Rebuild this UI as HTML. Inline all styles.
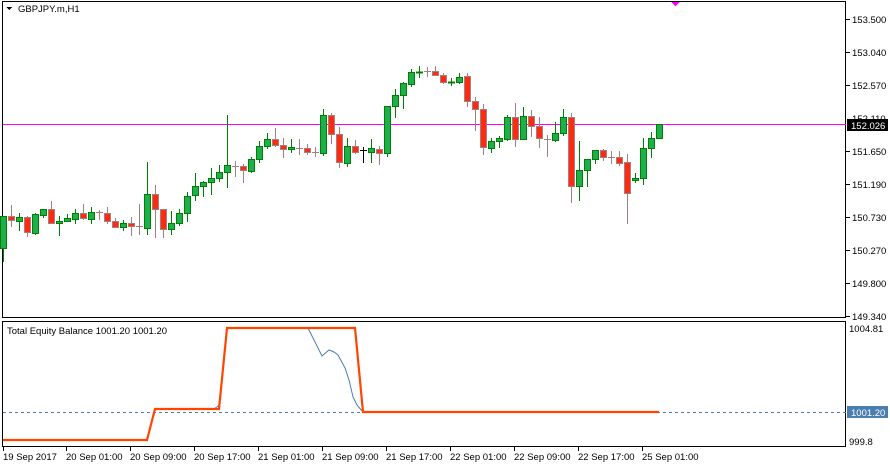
<!DOCTYPE html>
<html><head><meta charset="utf-8"><style>
html,body{margin:0;padding:0;background:#fff;width:890px;height:464px;overflow:hidden}
svg text{font-family:"Liberation Sans","DejaVu Sans",sans-serif;font-size:9.5px;fill:#000}
</style></head><body>
<svg id="s" width="890" height="464" xmlns="http://www.w3.org/2000/svg" shape-rendering="crispEdges">
<rect x="0" y="0" width="890" height="464" fill="#fff"/>
<rect x="2.5" y="1.5" width="843" height="316" fill="none" stroke="#000"/>
<rect x="2.5" y="321.5" width="843" height="125" fill="none" stroke="#000"/>
<polygon points="6,7 12,7 9,10" fill="#000"/>
<text x="18" y="12">GBPJPY.m,H1</text>
<polygon points="671,2 680,2 675.5,6" fill="#ff00ff"/>
<line x1="3" y1="124.5" x2="846" y2="124.5" stroke="#ff00ff" stroke-width="1"/>
<g id="candles"></g>
<g stroke="#000">
<line x1="846" y1="19.5" x2="850" y2="19.5"/><line x1="846" y1="52.5" x2="850" y2="52.5"/>
<line x1="846" y1="85.5" x2="850" y2="85.5"/><line x1="846" y1="151.5" x2="850" y2="151.5"/>
<line x1="846" y1="184.5" x2="850" y2="184.5"/><line x1="846" y1="217.5" x2="850" y2="217.5"/>
<line x1="846" y1="250.5" x2="850" y2="250.5"/><line x1="846" y1="283.5" x2="850" y2="283.5"/>
<line x1="846" y1="316.5" x2="850" y2="316.5"/>
</g>
<text x="852" y="23">153.500</text>
<text x="852" y="56">153.040</text>
<text x="852" y="89">152.570</text>
<text x="852" y="122">152.110</text>
<rect x="847" y="119" width="41" height="12" fill="#000"/>
<text x="851" y="129" style="fill:#fff">152.026</text>
<text x="852" y="155">151.650</text>
<text x="852" y="188">151.190</text>
<text x="852" y="221">150.730</text>
<text x="852" y="254">150.270</text>
<text x="852" y="287">149.800</text>
<text x="852" y="320">149.340</text>
<text x="7" y="334">Total Equity Balance 1001.20 1001.20</text>
<line x1="3" y1="412.5" x2="846" y2="412.5" stroke="#4a7eb0" stroke-dasharray="3,3"/>
<polyline shape-rendering="auto" points="214,409 218,406 220,405" fill="none" stroke="#4a7eb0" stroke-width="1"/>
<polyline shape-rendering="auto" points="308,328 316,344 322,356 329,350 334,352 338,355 345,368 349,380 353,397 357,405 362,411" fill="none" stroke="#4a7eb0" stroke-width="1"/>
<polyline shape-rendering="auto" points="3,440 147,440 155,409 219,409 227,328 355,328 363,412 659,412" fill="none" stroke="#ff4500" stroke-width="2.2"/>
<rect x="847" y="406" width="41" height="12" fill="#4a7eb0"/>
<text x="851" y="416" style="fill:#fff">1001.20</text>
<text x="849" y="332">1004.81</text>
<text x="849" y="445">999.8</text>
<g stroke="#000" id="tt"></g>
<text x="3" y="460">19 Sep 2017</text>
<text x="66" y="460">20 Sep 01:00</text>
<text x="130" y="460">20 Sep 09:00</text>
<text x="194" y="460">20 Sep 17:00</text>
<text x="258" y="460">21 Sep 01:00</text>
<text x="322" y="460">21 Sep 09:00</text>
<text x="386" y="460">21 Sep 17:00</text>
<text x="450" y="460">22 Sep 01:00</text>
<text x="514" y="460">22 Sep 09:00</text>
<text x="578" y="460">22 Sep 17:00</text>
<text x="642" y="460">25 Sep 01:00</text>
</svg>
<script>
var D=[
[216,248,216,261,'g'],[216,220,205,226,'r'],[217,221,213,230,'g'],[217,232,216,236,'r'],[214,233,213,234,'g'],
[209,215,209,217,'g'],[209,223,201,223,'r'],[221,223,216,235,'g'],[218,221,214,221,'g'],[213,219,209,223,'g'],
[213,218,204,219,'r'],[212,219,207,223,'g'],[212,213,210,219,'d'],[213,221,207,223,'r'],[221,227,218,227,'r'],
[223,227,220,230,'g'],[223,226,217,235,'r'],[226,227,204,234,'d'],[194,228,162,234,'g'],[194,209,185,237,'r'],
[209,229,209,237,'r'],[223,229,211,234,'g'],[213,223,209,225,'g'],[196,213,192,221,'g'],[186,195,173,200,'g'],
[182,186,181,196,'g'],[178,182,168,194,'g'],[172,178,165,181,'g'],[165,172,115,187,'g'],[166,166,161,176,'d'],
[166,170,164,182,'r'],[159,171,157,172,'g'],[146,159,141,162,'g'],[139,146,133,148,'g'],[139,145,128,146,'r'],
[145,149,138,157,'r'],[147,149,139,152,'g'],[148,148,139,154,'d'],[148,152,144,154,'r'],[152,152,147,156,'d'],
[115,153,109,155,'g'],[115,134,113,143,'r'],[134,162,127,167,'r'],[146,163,138,166,'g'],[146,152,140,153,'r'],
[150,150,147,162,'k'],[148,152,139,162,'g'],[149,153,146,164,'r'],[106,153,106,156,'g'],[95,106,89,117,'g'],
[83,95,82,108,'g'],[72,84,69,86,'g'],[72,72,66,77,'gd'],[71,71,67,76,'d'],[71,75,66,75,'r'],
[75,82,73,83,'r'],[82,82,78,85,'gd'],[77,82,73,83,'g'],[76,101,73,106,'r'],[101,109,97,130,'r'],
[109,147,104,154,'r'],[141,148,138,152,'g'],[138,141,136,147,'g'],[117,139,115,140,'g'],[117,139,103,146,'r'],
[116,139,107,139,'g'],[116,126,110,136,'r'],[126,138,117,147,'r'],[139,139,135,156,'d'],[133,140,122,141,'g'],
[117,133,109,135,'g'],[117,186,113,202,'r'],[170,186,141,200,'g'],[159,170,159,186,'g'],[150,159,150,163,'g'],
[150,157,149,160,'r'],[157,157,151,163,'d'],[157,163,151,165,'r'],[162,193,154,223,'r'],[178,180,173,182,'g'],
[148,178,138,184,'g'],[138,148,132,157,'g'],[124,138,124,138,'g']];
var h='';
D.forEach(function(c,i){var x=3+8*i,t=c[0],b=c[1],wt=c[2],wb=c[3],k=c[4];
var wc=(k=='g'||k=='gd')?'#008000':(k=='k'?'#000':'#a08080');
h+='<line x1="'+(x+.5)+'" y1="'+wt+'" x2="'+(x+.5)+'" y2="'+(wb+1)+'" stroke="'+wc+'"/>';
if(k=='g'){h+='<rect x="'+(x-2.5)+'" y="'+(t+.5)+'" width="6" height="'+Math.max(b-t,1)+'" fill="#1fae4c" stroke="#008000"/>';}
else if(k=='r'){h+='<rect x="'+(x-2.5)+'" y="'+(t+.5)+'" width="6" height="'+Math.max(b-t,1)+'" fill="#ff2a10" stroke="#a08080"/>';}
else{h+='<line x1="'+(x-3)+'" y1="'+(t+.5)+'" x2="'+(x+4)+'" y2="'+(t+.5)+'" stroke="'+wc+'" stroke-width="'+(k=='gd'?2:1)+'"/>';}
});
document.getElementById('candles').innerHTML=h;
var t='';[3,66,130,194,258,322,386,450,514,578,642].forEach(function(x){t+='<line x1="'+(x+.5)+'" y1="447" x2="'+(x+.5)+'" y2="451"/>';});
document.getElementById('tt').innerHTML=t;
</script>
</body></html>
